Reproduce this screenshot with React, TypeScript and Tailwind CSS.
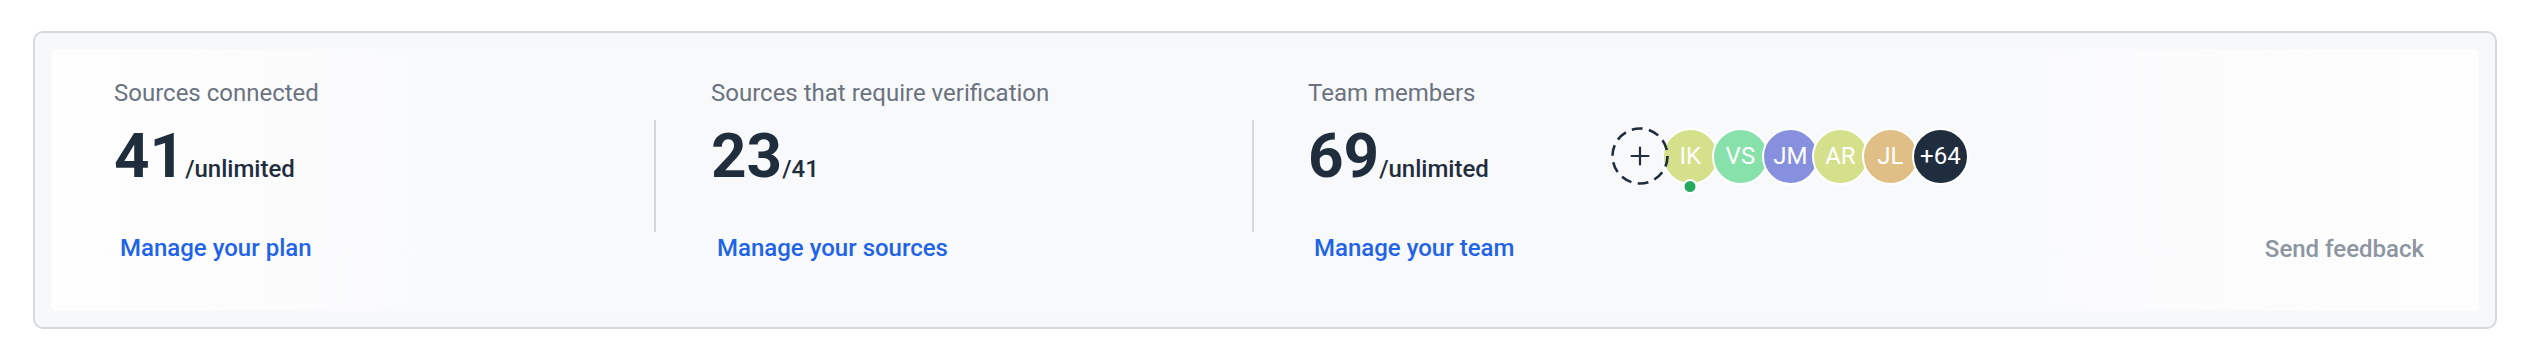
const avatars = [
  { initials: "IK", color: "bg-[#d4e08a]", online: true },
  { initials: "VS", color: "bg-[#86e1ab]" },
  { initials: "JM", color: "bg-[#8790de]" },
  { initials: "AR", color: "bg-[#d4e08a]" },
  { initials: "JL", color: "bg-[#e0bf86]" },
  { initials: "+64", color: "bg-[#1f2d3f]" },
];

function AddMember() {
  return (
    <button type="button" className="relative z-10 h-[58px] w-[58px] shrink-0">
      <svg width="58" height="58" viewBox="0 0 58 58" fill="none">
        <circle cx="29" cy="29" r="27.5" stroke="#1f2d3d" strokeWidth="2.6" strokeDasharray="10.8 6.5" />
        <path d="M29 20.5v17M20.5 29h17" stroke="#1f2d3d" strokeWidth="2.2" strokeLinecap="round" />
      </svg>
    </button>
  );
}

function Stat({
  label,
  value,
  unit,
  link,
  children,
}: {
  label: string;
  value: string;
  unit: string;
  link: string;
  children?: React.ReactNode;
}) {
  return (
    <div className="flex min-w-0 flex-col">
      <span className="text-[24px] leading-8 text-[#6b7280]">{label}</span>
      <div className="mt-4 flex h-[62px] items-center">
        <div className="flex items-baseline text-[#1f2d3d]">
          <span className="text-[62px] font-bold leading-none">{value}</span>
          <span className="text-[24px] font-medium leading-8">{unit}</span>
        </div>
        {children}
      </div>
      <a href="#" className="mt-[45px] pl-[6px] text-[24px] font-medium leading-8 text-[#1f63e9]">
        {link}
      </a>
    </div>
  );
}

function Divider() {
  return <div className="mt-[43px] h-[112px] w-[2px] shrink-0 bg-[#d4d6db]" />;
}

export default function App() {
  return (
    <div className="min-h-[358px] bg-white pt-[31px] font-['Roboto',sans-serif]">
      <div className="ml-[33px] w-[2464px] rounded-[10px] border-2 border-[#d7d9de] bg-[#f7f8fa] p-4">
        <div className="flex h-[262px] rounded-md bg-[linear-gradient(90deg,#fefefe_0%,#f8f9fb_20%,#f8f9fb_76%,#fefefe_100%)] pl-[63px] pr-[55px] pt-[28px]">
          <div className="w-[540px] shrink-0">
            <Stat label="Sources connected" value="41" unit="/unlimited" link="Manage your plan" />
          </div>
          <Divider />
          <div className="ml-[55px] w-[541px] shrink-0">
            <Stat label="Sources that require verification" value="23" unit="/41" link="Manage your sources" />
          </div>
          <Divider />
          <div className="ml-[54px] shrink-0">
            <Stat label="Team members" value="69" unit="/unlimited" link="Manage your team">
              <div className="ml-auto flex items-center pl-[122px]">
                <AddMember />
                {avatars.map((a) => (
                  <div
                    key={a.initials}
                    className={
                      "relative -ml-[7px] flex h-[57px] w-[57px] shrink-0 items-center justify-center rounded-full border-2 border-white text-[24px] leading-none text-white " +
                      a.color
                    }
                  >
                    {a.initials}
                    {a.online && (
                      <span className="absolute -bottom-[11px] left-1/2 h-[15px] w-[15px] -translate-x-1/2 rounded-full border-2 border-white bg-[#25a95c]" />
                    )}
                  </div>
                ))}
              </div>
            </Stat>
          </div>
          <div className="ml-auto flex flex-col justify-end pb-[46px]">
            <a href="#" className="text-[24px] font-medium leading-8 text-[#8c95a1]">
              Send feedback
            </a>
          </div>
        </div>
      </div>
    </div>
  );
}
